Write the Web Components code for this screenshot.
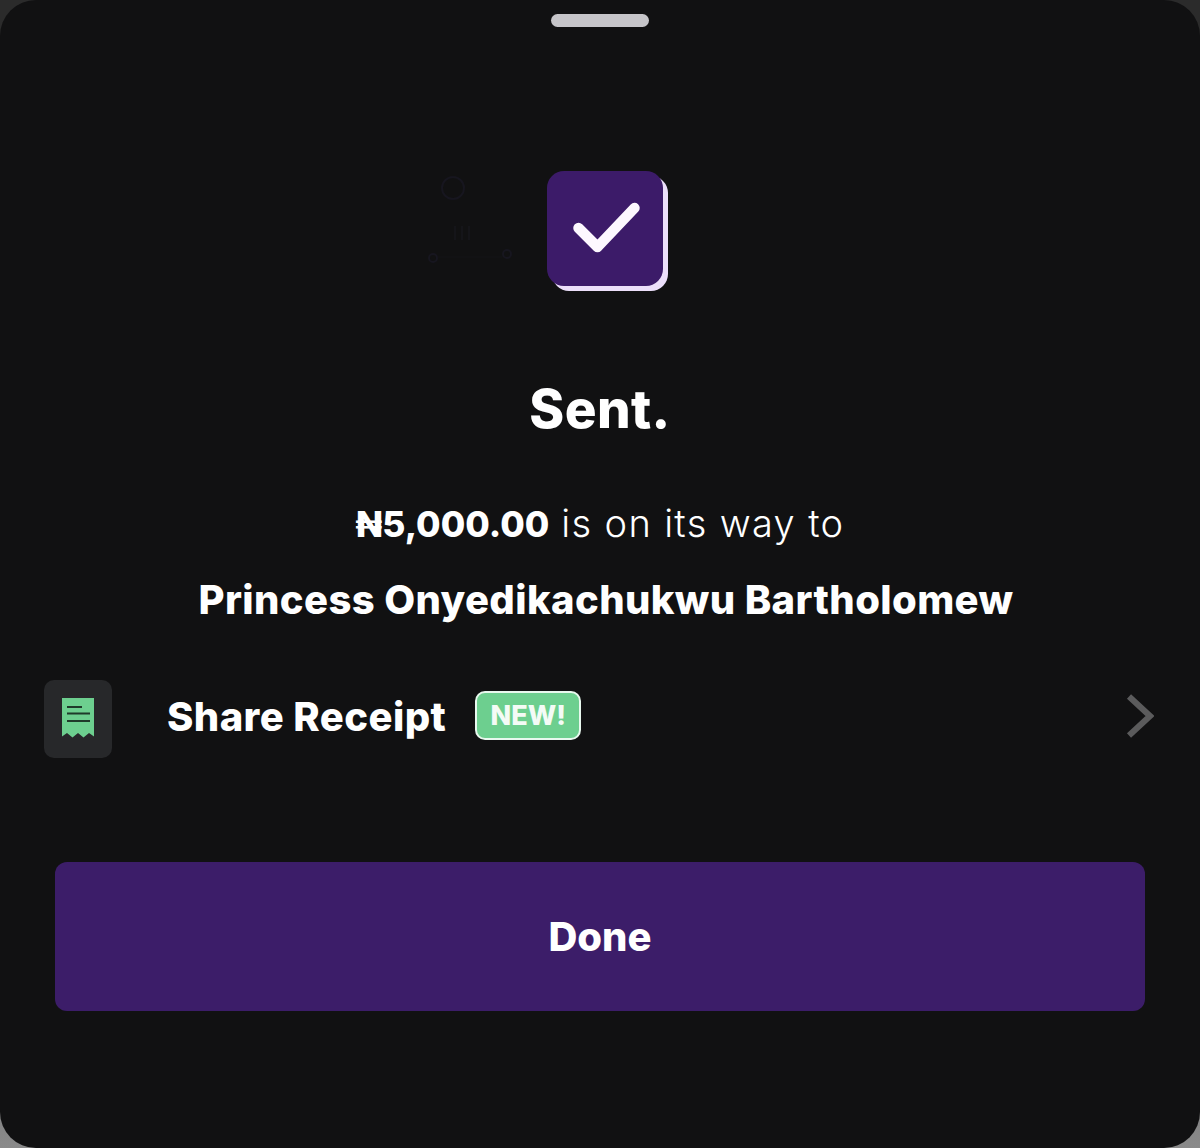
<!DOCTYPE html>
<html lang="en">
<head>
<meta charset="utf-8">
<title>Sent</title>
<style>
html,body{margin:0;padding:0;height:100%}
html{background:linear-gradient(#2b2b2b 0,#2b2b2b 50%,#8a8a8a 100%)}
body{font-family:Inter,Lato,"Noto Sans",sans-serif;color:#fff}
</style>
</head>
<body>
<sent-sheet>
  <success-icon></success-icon>
  <h-title>Sent.</h-title>
  <message-line><b>₦5,000.00</b> is on its way to</message-line>
  <recipient-name>Princess Onyedikachukwu Bartholomew</recipient-name>
  <receipt-row>Share Receipt</receipt-row>
  <done-button>Done</done-button>
</sent-sheet>
<script>
function def(name,css,html){
  customElements.define(name,class extends HTMLElement{
    constructor(){super();this.attachShadow({mode:'open'}).innerHTML='<style>'+css+'</style>'+html;}
  });
}
def('sent-sheet',
  ':host{display:flex;flex-direction:column;box-sizing:border-box;width:1200px;height:1148px;background:#111112;border-radius:36px;padding-top:14px;overflow:hidden}'+
  '.handle{align-self:center;width:98px;height:13px;border-radius:7px;background:#c6c5c9;margin-bottom:144px;flex:none}',
  '<div class="handle"></div><slot></slot>');
def('success-icon',
  ':host{display:block;position:relative;align-self:center;width:121px;height:120px;margin-left:14px;flex:none}'+
  '.box{position:absolute;left:0;top:0;width:116px;height:115px;border-radius:17px;background:#3c1b69;box-shadow:5px 5px 0 #ecdffa;display:flex;align-items:center;justify-content:center}'+
  'svg.check{display:block;width:116px;height:115px}'+
  'svg.faint{position:absolute;left:-125px;top:0;width:100px;height:105px}',
  '<svg class="faint" viewBox="0 0 100 105" fill="none" stroke="#17161f" stroke-width="2"><circle cx="31" cy="17" r="11"/><circle cx="11" cy="87" r="4"/><circle cx="85" cy="83" r="4"/><path d="M33 55v14M40 55v14M47 55v14" stroke="#151519"/><path d="M16 86h64" stroke="#141416" stroke-width="1"/></svg>'+
  '<div class="box"><svg class="check" viewBox="0 0 116 115" fill="none"><path d="M31.500 57L50.500 76 87.500 37" stroke="#fdf8ff" stroke-width="10.500" stroke-linecap="round" stroke-linejoin="round"/></svg></div>');
def('h-title',
  ':host{display:block;text-align:center;font-weight:800;font-size:53px;line-height:64px;margin-top:86px;flex:none;color:#fff;letter-spacing:.4px}',
  '<slot></slot>');
def('message-line',
  ':host{display:block;text-align:center;font-size:38px;line-height:46px;margin-top:59px;flex:none;font-weight:300;letter-spacing:1.35px}'+
  '::slotted(b){font-weight:800;font-size:35.500px;letter-spacing:0}',
  '<slot></slot>');
def('recipient-name',
  ':host{display:block;text-align:center;font-weight:800;font-size:40px;line-height:48px;margin-top:28px;margin-left:12px;flex:none;letter-spacing:.38px}',
  '<slot></slot>');
def('receipt-row',
  ':host{display:flex;align-items:center;height:78px;margin:56px 46px 0 44px;flex:none}'+
  '.tile{width:68px;height:78px;border-radius:10px;background:#27282a;display:flex;align-items:center;justify-content:center;flex:none}'+
  '.tile svg{display:block;width:34px;height:42px}'+
  '.label{margin-left:55px;font-weight:800;font-size:40px;line-height:48px;white-space:nowrap;margin-top:-4px;letter-spacing:.42px}'+
  '.badge{box-sizing:border-box;margin-left:29px;width:106px;height:49px;margin-top:-8px;border:2px solid #e8f8ee;border-radius:10px;background:#6dcf8f;color:#f4fbf6;font-weight:800;font-size:27px;display:flex;align-items:center;justify-content:center}'+
  '.chev{margin-left:auto;width:28px;height:46px;flex:none;display:block;margin-top:-7px}',
  '<div class="tile"><svg viewBox="0 0 34 42"><path d="M1 0H33V38.500L28 35 22.500 39.500 17 35 11.500 39.500 6 35 1 38.500Z" fill="#6dcf8f"/><path d="M6 9H21M6 15.500H29M6 23H29" stroke="#1f3a2a" stroke-width="2" fill="none"/></svg></div>'+
  '<span class="label"><slot></slot></span><span class="badge">NEW!</span>'+
  '<svg class="chev" viewBox="0 0 28 46" fill="none"><path d="M3 3.500L24 23 3 42.500" stroke="#5b5b5c" stroke-width="6"/></svg>');
def('done-button',
  ':host{display:flex;align-items:center;justify-content:center;box-sizing:border-box;height:149px;margin:104px 55px 0;background:#3c1d69;border-radius:12px;font-weight:800;font-size:40px;color:#fff;flex:none}',
  '<slot></slot>');
</script>
</body>
</html>
